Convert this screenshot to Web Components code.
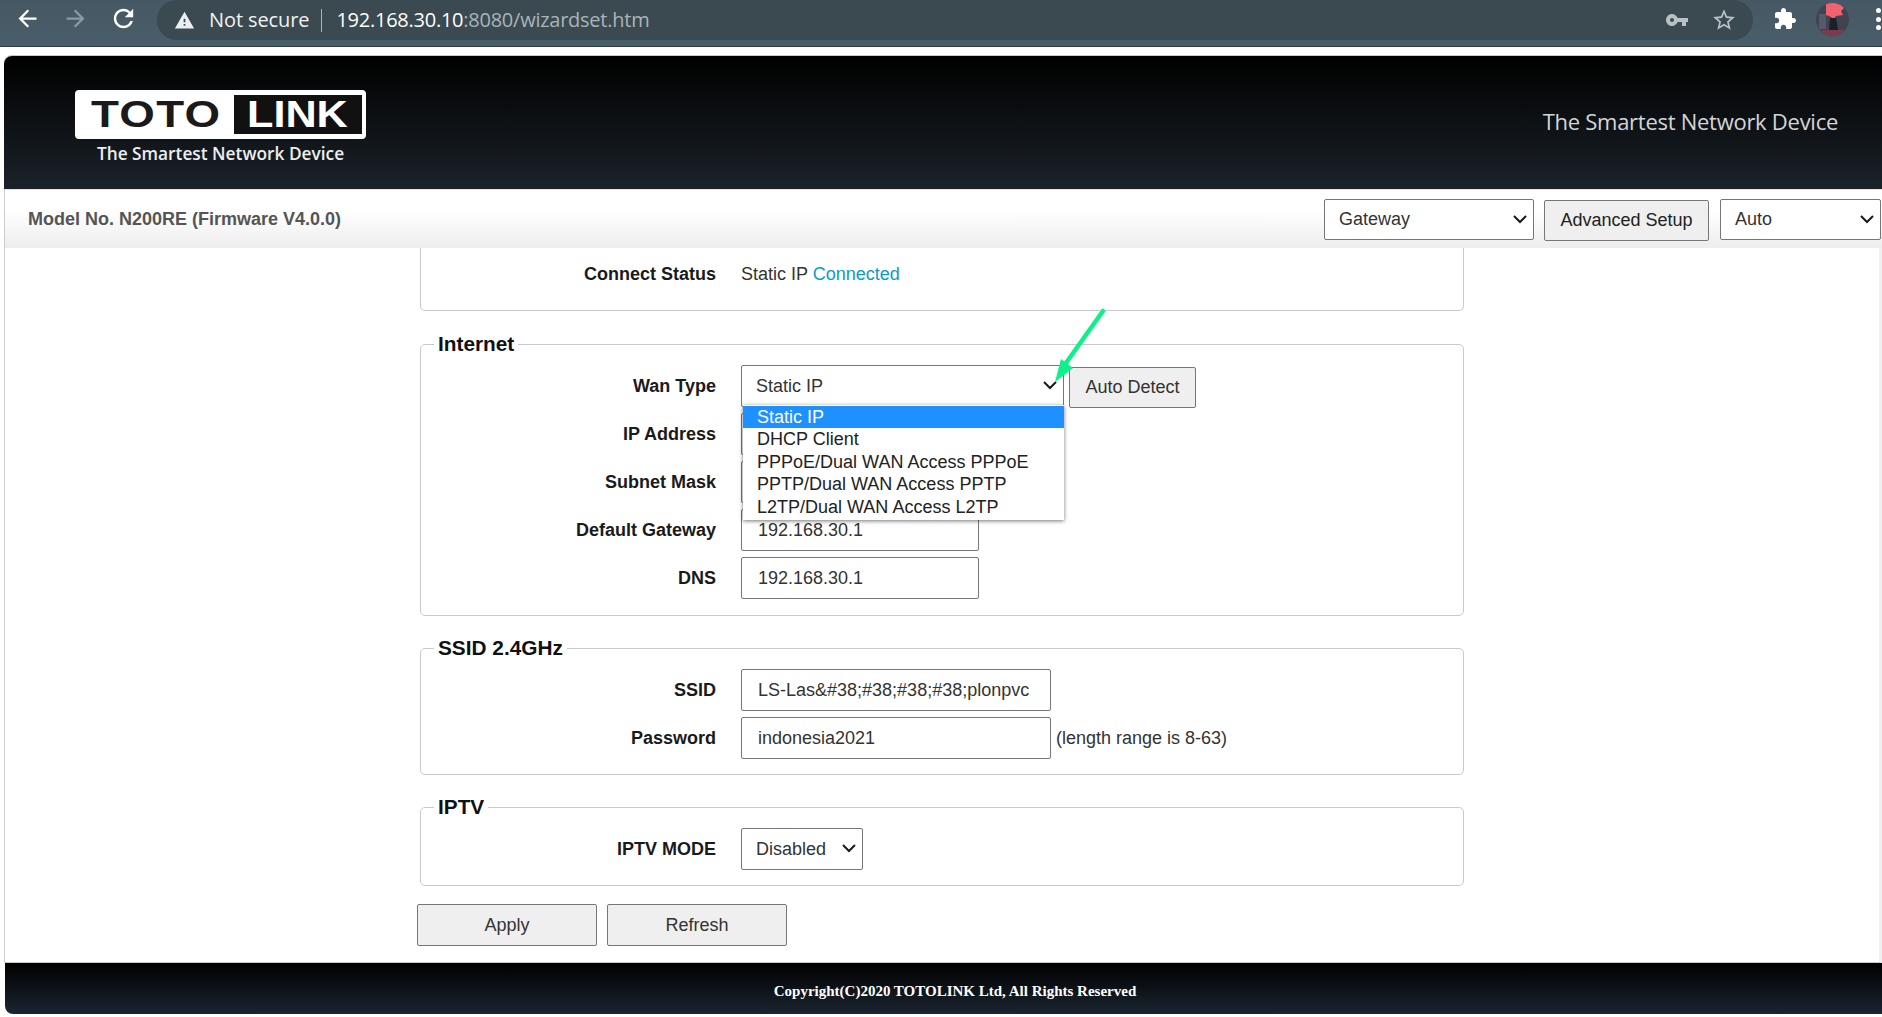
<!DOCTYPE html>
<html lang="en"><head><meta charset="utf-8"><title>wizardset</title>
<style>
html,body{margin:0;padding:0;background:#fff}
body{width:1882px;height:1017px;overflow:hidden;position:relative;display:flex;flex-direction:column;font-family:"Liberation Sans",Arial,sans-serif;font-size:18px;color:#333}
</style></head><body>
<browser-bar></browser-bar>
<tl-app>
  <tl-header></tl-header>
  <tl-subbar>
    <span slot="model">Model No. N200RE (Firmware V4.0.0)</span>
    <tl-select style="width:210px;height:41px;margin-right:10px">Gateway</tl-select>
    <tl-button style="width:165px;height:41px;margin:1px 11px 0 0;color:#222">Advanced Setup</tl-button>
    <tl-select style="width:161px;height:41px;margin-right:1px">Auto</tl-select>
  </tl-subbar>
  <tl-main>
    <tl-fieldset cut>
      <tl-row label="Connect Status"><span>Static IP <tl-status>Connected</tl-status></span></tl-row>
    </tl-fieldset>
    <tl-fieldset style="margin-top:21px;--pb:16px">
      <span slot="legend">Internet</span>
      <tl-row label="Wan Type" style="position:relative;z-index:2">
        <tl-select style="width:323px">Static IP
          <tl-dropdown slot="popup">
            <tl-option selected>Static IP</tl-option>
            <tl-option>DHCP Client</tl-option>
            <tl-option>PPPoE/Dual WAN Access PPPoE</tl-option>
            <tl-option>PPTP/Dual WAN Access PPTP</tl-option>
            <tl-option>L2TP/Dual WAN Access L2TP</tl-option>
          </tl-dropdown>
        </tl-select>
        <tl-button style="width:127px;height:41px;margin:2px 0 -1px 5px">Auto Detect</tl-button>
      </tl-row>
      <tl-row label="IP Address"><tl-input style="width:238px"></tl-input></tl-row>
      <tl-row label="Subnet Mask"><tl-input style="width:238px"></tl-input></tl-row>
      <tl-row label="Default Gateway"><tl-input style="width:238px">192.168.30.1</tl-input></tl-row>
      <tl-row label="DNS"><tl-input style="width:238px">192.168.30.1</tl-input></tl-row>
    </tl-fieldset>
    <tl-fieldset style="margin-top:20px">
      <span slot="legend">SSID 2.4GHz</span>
      <tl-row label="SSID"><tl-input style="width:310px">LS-Las&amp;#38;#38;#38;#38;plonpvc</tl-input></tl-row>
      <tl-row label="Password"><tl-input style="width:310px">indonesia2021</tl-input><span style="margin-left:5px">(length range is 8-63)</span></tl-row>
    </tl-fieldset>
    <tl-fieldset style="margin-top:20px">
      <span slot="legend">IPTV</span>
      <tl-row label="IPTV MODE"><tl-select style="width:122px">Disabled</tl-select></tl-row>
    </tl-fieldset>
    <tl-actions>
      <tl-button style="width:180px;height:42px">Apply</tl-button>
      <tl-button style="width:180px;height:42px">Refresh</tl-button>
    </tl-actions>
  </tl-main>
  <tl-footer>Copyright(C)2020 TOTOLINK Ltd, All Rights Reserved</tl-footer>
</tl-app>
<tl-arrow></tl-arrow>
<script>
function def(name, css, html, init){
  customElements.define(name, class extends HTMLElement{
    constructor(){super();const r=this.attachShadow({mode:'open'});
      r.innerHTML='<style>'+css+'</style>'+html;}
    connectedCallback(){if(init)init(this)}
  });
}
const ic=(d,x,f,s)=>`<svg style="${x}" width="${s}" height="${s}" viewBox="0 0 24 24" fill="${f}"><path d="${d}"/></svg>`;
def('browser-bar',`
:host{display:flex;align-items:flex-start;height:47px;flex:none;box-sizing:border-box;background:linear-gradient(#455863,#4a5e69);border-bottom:1px solid #2e3a41;color:#f1f3f4;font-family:"Open Sans","Liberation Sans",sans-serif;overflow:hidden}
.nav{display:flex;width:157px;flex:none;height:36px;align-items:center}
svg{flex:none;display:block}
.pill{display:flex;align-items:center;flex:none;width:1596px;height:40px;background:#3b4950;border-radius:20px;box-sizing:border-box}
.ns{font-size:20px;margin-left:14px;letter-spacing:-.1px;white-space:nowrap;line-height:38px}
.div{width:1px;height:23px;background:#aab2b7;margin:0 14px 0 12px;flex:none}
.url{font-size:20px;letter-spacing:-.25px;color:#a9b4ba;white-space:nowrap;flex:1;line-height:38px}
.url b{font-weight:400;color:#fff}
.right{display:flex;align-items:center;height:38px;flex:1}
.dots{display:flex;flex-direction:column;gap:3.5px;margin-left:27px}
.dots i{width:5px;height:5px;border-radius:50%;background:#fff;display:block}
`,`<div class="nav">
${ic('M20 11H7.83l5.59-5.59L12 4l-8 8 8 8 1.41-1.41L7.83 13H20v-2z','margin-left:14px','#fff',27)}
${ic('M12 4l-1.41 1.41L16.17 11H4v2h12.17l-5.58 5.59L12 20l8-8z','margin-left:21px','#8b9aa2',27)}
${ic('M17.65 6.35C16.2 4.9 14.21 4 12 4c-4.42 0-7.99 3.58-7.99 8s3.57 8 7.99 8c3.73 0 6.84-2.55 7.73-6h-2.08c-.82 2.33-3.04 4-5.65 4-3.31 0-6-2.69-6-6s2.69-6 6-6c1.66 0 3.14.69 4.22 1.78L13 11h7V4l-2.35 2.35z','margin-left:20px','#fff',29)}
</div>
<div class="pill">
${ic('M1 21h22L12 2 1 21zm12-3h-2v-2h2v2zm0-4h-2v-4h2v4z','margin-left:17px','#eceff1',21)}
<span class="ns">Not secure</span><span class="div"></span>
<span class="url"><b>192.168.30.10</b>:8080/wizardset.htm</span>
${ic('M12.65 10C11.83 7.67 9.61 6 7 6c-3.31 0-6 2.69-6 6s2.69 6 6 6c2.61 0 4.83-1.67 5.65-4H17v4h4v-4h2v-4H12.65zM7 14c-1.1 0-2-.9-2-2s.9-2 2-2 2 .9 2 2-.9 2-2 2z','margin-right:22px;margin-top:-1px','#b9c0c4',24)}
${ic('M22 9.24l-7.19-.62L12 2 9.19 8.63 2 9.24l5.46 4.73L5.82 21 12 17.27 18.18 21l-1.63-7.03L22 9.24zM12 15.4l-3.76 2.27 1-4.28-3.32-2.88 4.38-.38L12 6.1l1.71 4.04 4.38.38-3.32 2.88 1 4.28L12 15.4z','margin-right:16px','#b9c0c4',26)}
</div>
<div class="right">
${ic('M20.5 11H19V7c0-1.1-.9-2-2-2h-4V3.5C13 2.12 11.88 1 10.5 1S8 2.12 8 3.5V5H4c-1.1 0-1.99.9-1.99 2v3.8H3.5c1.49 0 2.7 1.21 2.7 2.7s-1.21 2.7-2.7 2.7H2V20c0 1.1.9 2 2 2h3.8v-1.5c0-1.49 1.21-2.7 2.7-2.7 1.49 0 2.7 1.21 2.7 2.7V22H17c1.1 0 2-.9 2-2v-4h1.5c1.38 0 2.5-1.12 2.5-2.5S21.88 11 20.5 11z','margin-left:20px','#fff',24)}
<svg style="margin-left:19px" width="33" height="33" viewBox="0 0 33 33"><defs><clipPath id="av"><circle cx="16.5" cy="16.5" r="16.5"/></clipPath></defs><g clip-path="url(#av)"><rect width="33" height="33" fill="#3f4352"/><path d="M10 0h16v3l2 2-3 3 2 4-7 1-2 3-5-3-3-1z" fill="#f0626e"/><rect x="3" y="11" width="7" height="15" fill="#56596a"/><path d="M14 15h6l2 12h-9z" fill="#1e1f28"/><path d="M6 27h22v6H6z" fill="#7c3a4a"/></g></svg>
<div class="dots"><i></i><i></i><i></i></div>
</div>`);
def('tl-app',`
:host{display:flex;flex-direction:column;flex:1;min-height:0;margin:8px 0 3px 4px;border-top:1px solid #c8c8c8;border-radius:8px 0 0 8px}
`,`<slot></slot>`);
def('tl-logo',`
:host{display:flex;flex-direction:column;align-items:center;width:291px;color:#fff}
.box{box-sizing:border-box;width:291px;height:49px;background:#fff;border-radius:4px;display:flex;align-items:center;padding:5px 4px 5px 16px;font-weight:700;font-size:36px;line-height:39px}
.toto{flex:1;color:#1a1a1a;overflow:hidden}
.toto span{display:inline-block;transform-origin:0 50%;transform:scaleX(1.27);letter-spacing:1px;font-family:"Liberation Sans",sans-serif}
.link{width:128px;height:39px;background:#111;color:#fff;box-sizing:border-box;padding-left:13px;overflow:hidden}
.link span{display:inline-block;transform-origin:0 50%;transform:scaleX(1.2)}
.tag{font:600 17.3px/20px "Open Sans","Liberation Sans",sans-serif;margin-top:5px;white-space:nowrap;color:#eceeef}
`,`<div class="box"><div class="toto"><span>TOTO</span></div><div class="link"><span>LINK</span></div></div><div class="tag">The Smartest Network Device</div>`);
def('tl-header',`
:host{display:flex;flex:none;height:133px;box-sizing:border-box;padding:34px 44px 0 71px;justify-content:space-between;align-items:flex-start;background:linear-gradient(#000,#1b2229);border-radius:8px 0 0 0}
.t{font:400 22px/30px "Open Sans","Liberation Sans",sans-serif;color:#d3d6d8;margin-top:16px;letter-spacing:-.27px}
`,`<tl-logo></tl-logo><div class="t">The Smartest Network Device</div>`);
def('tl-subbar',`
:host{display:flex;align-items:flex-start;flex:none;box-sizing:border-box;height:59px;padding:9px 0 0 23px;border-top:1px solid #e3e3e3;border-left:1px solid #ccc;background:linear-gradient(#fff 35%,#ededed)}
.m{flex:1;font-weight:700;color:#555;padding-top:10px;line-height:20px}
`,`<div class="m"><slot name="model"></slot></div><slot></slot>`);
def('tl-select',`
:host{display:inline-flex;position:relative;align-items:center;box-sizing:border-box;height:42px;flex:none;background:#fff;border:1px solid #767676;border-radius:2px;padding-left:14px;color:#333;white-space:nowrap}
svg{position:absolute;right:6px;top:15px}
.pop{position:absolute;top:100%;left:1px;right:-1px}
`,`<slot></slot><svg width="14" height="9" viewBox="0 0 14 9" fill="none" stroke="#1a1a1a" stroke-width="2"><path d="M1 1l6 6 6-6"/></svg><div class="pop"><slot name="popup"></slot></div>`);
def('tl-dropdown',`
:host{display:block;background:#fff;padding:1px 0 2px;margin-top:-1px;box-shadow:0 1px 4px rgba(0,0,0,.55)}
`,`<slot></slot>`);
def('tl-option',`
:host{display:block;height:22.4px;line-height:22px;padding-left:14px;color:#222}
:host([selected]){background:#1e90ff;color:#fff}
`,`<slot></slot>`);
def('tl-button',`
:host{display:inline-flex;align-items:center;justify-content:center;box-sizing:border-box;flex:none;background:#efefef;border:1px solid #767676;border-radius:2px;color:#333;white-space:nowrap}
`,`<slot></slot>`);
def('tl-input',`
:host{display:flex;align-items:center;box-sizing:border-box;height:42px;flex:none;background:#fff;border:1px solid #767676;border-radius:2px;padding-left:16px;color:#333;white-space:nowrap}
`,`<slot></slot>`);
def('tl-status',`:host{color:#0a9bcb}`,`<slot></slot>`);
def('tl-row',`
:host{display:flex;align-items:center;min-height:42px}
.l{width:295px;box-sizing:border-box;text-align:right;font-weight:700;color:#1a1a1a;margin-right:25px;flex:none}
`,`<div class="l"></div><slot></slot>`,el=>{el.shadowRoot.querySelector('.l').textContent=el.getAttribute('label')});
def('tl-fieldset',`
:host{display:block;width:1044px;flex:none}
fieldset{margin:0;border:1px solid #c9c9c9;border-radius:5px;padding:9px 0 var(--pb,15px);display:flex;flex-direction:column;gap:6px;box-sizing:border-box}
legend{margin-left:13px;padding:0 4px;font-weight:700;font-size:20.8px;line-height:24px;color:#111}
:host([cut]) fieldset{border-top:0;border-radius:0 0 5px 5px;padding:5px 0 15px}
`,`<fieldset><legend><slot name="legend"></slot></legend><slot></slot></fieldset>`,el=>{
  if(el.hasAttribute('cut')) el.shadowRoot.querySelector('legend').remove();
});
def('tl-main',`
:host{display:flex;flex-direction:column;align-items:center;flex:1;min-height:0;overflow:hidden;background:#fff;border-left:1px solid #ccc;border-right:3px solid #f0f0f0;border-bottom:1px solid #c8c8c8}
`,`<slot></slot>`);
def('tl-actions',`
:host{display:flex;gap:10px;width:1050px;margin-top:18px}
`,`<slot></slot>`);
def('tl-footer',`
:host{display:block;flex:none;height:51px;margin-left:1px;text-align:center;padding-left:23px;box-sizing:border-box;background:linear-gradient(#000,#1b2530);border-radius:0 0 0 8px;color:#fff;font:700 15px/56px "Liberation Serif",serif}
`,`<slot></slot>`);
def('tl-arrow',`
:host{position:absolute;left:1040px;top:300px;width:80px;height:90px;display:block;z-index:5}
svg{display:block}
`,`<svg width="80" height="90" viewBox="0 0 80 90"><path d="M63 11L26 63" stroke="#0cf28a" stroke-width="4.5" stroke-linecap="round" fill="none"/><path d="M15 82L21 59 33 68z" fill="#0cf28a"/></svg>`);
</script>
</body></html>
